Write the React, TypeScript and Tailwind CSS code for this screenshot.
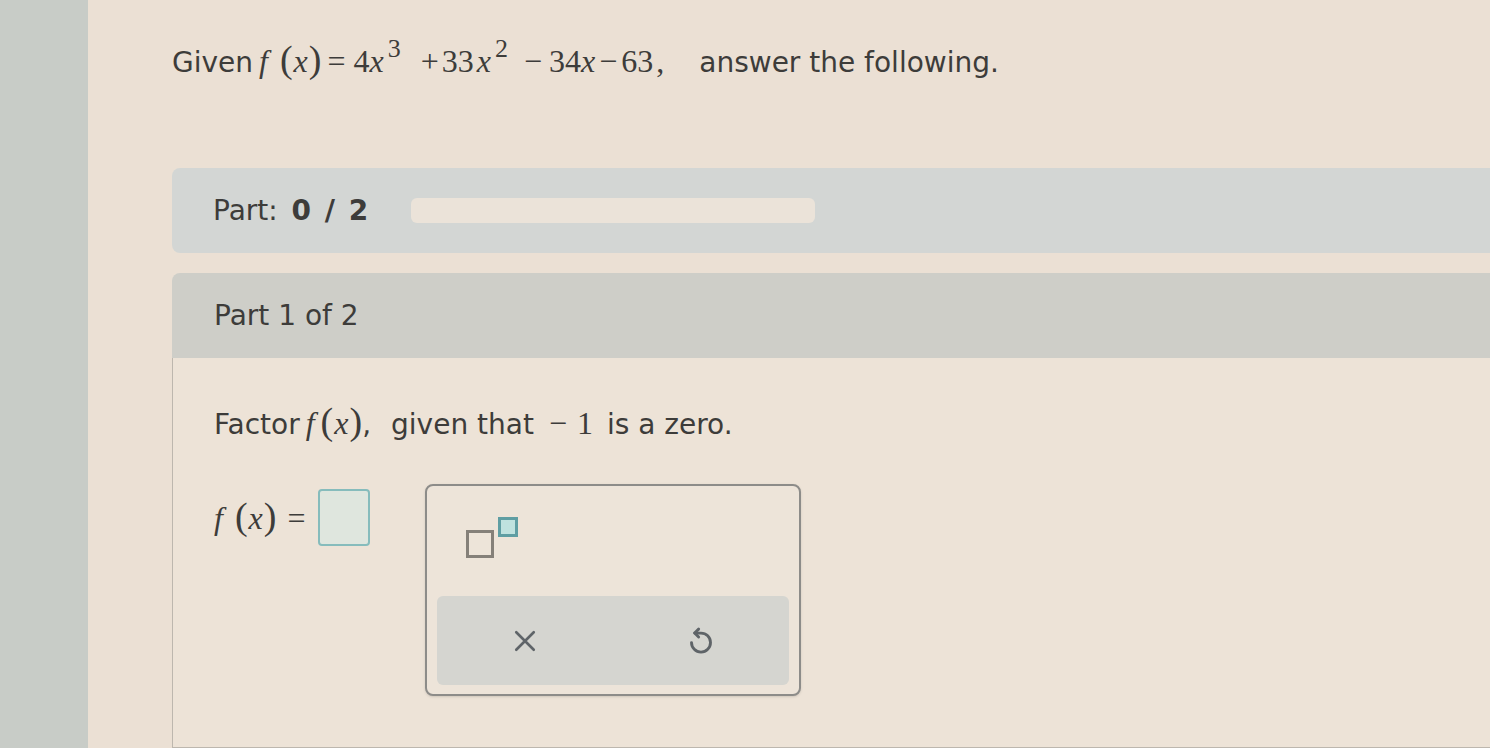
import React from "react";

const sans = { fontFamily: '"DejaVu Sans", Verdana, sans-serif' };
const serif = { fontFamily: '"Liberation Serif", "Times New Roman", serif' };

// small inline math pieces, MathJax-ish spacing
const I = ({ children, className = "" }: { children: React.ReactNode; className?: string }) => (
  <span className={`italic ${className}`}>{children}</span>
);
const Sup = ({ children }: { children: React.ReactNode }) => (
  <span className="relative -top-[15px] ml-[4px] text-[26px]">{children}</span>
);
const Paren = ({ children, className = "" }: { children: React.ReactNode; className?: string }) => (
  <span className={`text-[38px] leading-none ${className}`}>{children}</span>
);

const FofX = ({ gap = "ml-[12px]" }: { gap?: string }) => (
  <>
    <I>f</I>
    <Paren className={gap}>(</Paren>
    <I className="ml-[1px]">x</I>
    <Paren className="ml-[1px]">)</Paren>
  </>
);

const UndoIcon = () => (
  <svg width="38" height="38" viewBox="0 0 24 24" fill="none" stroke="#5f6468" strokeWidth="1.8" strokeLinecap="round" strokeLinejoin="round">
    <path d="M8 7h4a6 6 0 1 1-6 6" />
    <path d="M10.5 4.5 8 7l2.5 2.5" />
  </svg>
);

const XIcon = () => (
  <svg width="30" height="30" viewBox="0 0 24 24" fill="none" stroke="#5f6468" strokeWidth="2.1" strokeLinecap="round">
    <path d="M5 5l14 14M19 5 5 19" />
  </svg>
);

export default function App() {
  return (
    <div className="flex h-[748px] w-full overflow-hidden bg-[#ebe0d4] text-[#3d3c3a]" style={sans}>
      <div className="w-[88px] shrink-0 bg-[#c8ccc7]" />

      <main className="flex-1 pl-[84px] pt-[40px]">
        {/* question stem */}
        <div className="flex items-baseline text-[28px] leading-[42px]">
          <span>Given</span>
          <span className="ml-[6px] text-[32px]" style={serif}>
            <FofX />
            <span className="ml-[6px] mr-[8px]">=</span>
            <span>4</span>
            <I>x</I>
            <Sup>3</Sup>
            <span className="ml-[20px] mr-[3px]">+</span>
            <span>33</span>
            <I className="ml-[3px]">x</I>
            <Sup>2</Sup>
            <span className="ml-[16px] mr-[7px]">−</span>
            <span>34</span>
            <I>x</I>
            <span className="ml-[4px] mr-[4px]">−</span>
            <span>63</span>
            <span className="ml-[3px]">,</span>
          </span>
          <span className="ml-[35px]">answer the following.</span>
        </div>

        {/* progress bar */}
        <div className="mt-[83px] flex h-[85px] items-center rounded-l-lg bg-[#d3d6d4] pl-[41px] text-[28px]">
          <span className="whitespace-pre">
            Part: <span className="ml-[5px] font-bold [word-spacing:4px]">0 / 2</span>
          </span>
          <div className="ml-[43px] h-[25px] w-[404px] rounded-md bg-[#ebe3d9]" />
        </div>

        {/* part header */}
        <div className="mt-[20px] flex h-[85px] items-center rounded-tl-lg bg-[#cecec8] pl-[42px] text-[28px]">
          Part 1 of 2
        </div>

        {/* part body */}
        <div className="h-[390px] border-b border-l border-[#bdb7ae] bg-[#ede3d7] pl-[41px] pt-[44px]">
          <div className="flex items-baseline text-[28px] leading-[42px]">
            <span>Factor</span>
            <span className="ml-[6px] text-[32px]" style={serif}>
              <FofX gap="ml-[6px]" />
            </span>
            <span>,</span>
            <span className="ml-[20px]">given that</span>
            <span className="ml-[15px] text-[32px]" style={serif}>
              <span className="mr-[10px]">−</span>1
            </span>
            <span className="ml-[14px]">is a zero.</span>
          </div>

          <div className="mt-[38px] flex items-start">
            <div className="mt-[5px] flex items-center">
              <span className="text-[32px]" style={serif}>
                <FofX gap="ml-[12px]" />
                <span className="ml-[11px]">=</span>
              </span>
              <div className="ml-[13px] h-[57px] w-[52px] rounded-[4px] border-2 border-[#86bcbc] bg-[#dfe6de]" />
            </div>

            <div className="ml-[55px] h-[212px] w-[376px] rounded-lg border-2 border-[#8d8c89] bg-[#ede4d9] px-[10px] pb-[9px] pt-[31px] shadow-sm">
              <div className="ml-[29px] flex h-[60px] items-start">
                <div className="mt-[13px] h-[28px] w-[28px] border-[3px] border-[#858079]" />
                <div className="ml-[4px] h-[20px] w-[20px] border-[3px] border-[#5f9ea3] bg-[#bfe2df]" />
              </div>
              <div className="mt-[19px] grid h-[89px] grid-cols-2 rounded-md bg-[#d5d5d0]">
                <div className="flex items-center justify-center">
                  <XIcon />
                </div>
                <div className="flex items-center justify-center">
                  <UndoIcon />
                </div>
              </div>
            </div>
          </div>
        </div>
      </main>
    </div>
  );
}
